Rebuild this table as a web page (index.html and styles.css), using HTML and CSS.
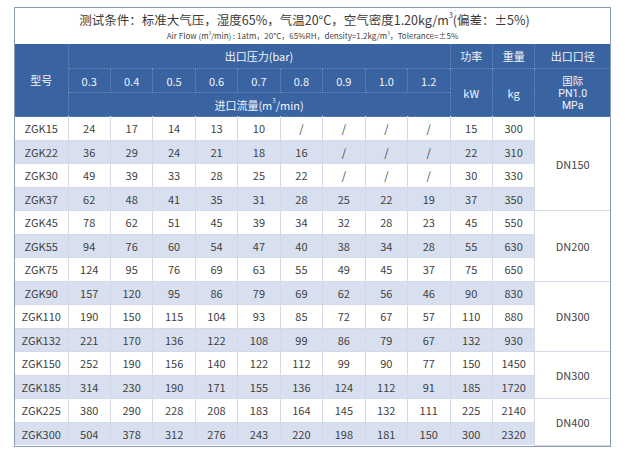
FILE: index.html
```html
<!DOCTYPE html>
<html lang="zh">
<head>
<meta charset="utf-8">
<link rel="stylesheet" href="styles.css">
</head>
<body>
<div class="sheet">
  <div class="caption">
    <div class="cap-main">测试条件：标准大气压，湿度65%，气温20°C，空气密度1.20kg/m<sup>3</sup>(偏差：±5%)</div>
    <div class="cap-sub">Air Flow (m<sup>3</sup>/min) : 1atm，20°C，65%RH，density=1.2kg/m<sup>3</sup>，Tolerance=±5%</div>
  </div>
  <table class="grid">
    <colgroup>
      <col class="c-model">
      <col class="c-num"><col class="c-num"><col class="c-num"><col class="c-num"><col class="c-num"><col class="c-num"><col class="c-num"><col class="c-num"><col class="c-num"><col class="c-num"><col class="c-num">
      <col class="c-out">
    </colgroup>
    <thead>
      <tr class="h1">
        <th rowspan="3">型号</th>
        <th colspan="9">出口压力(bar)</th>
        <th>功率</th>
        <th>重量</th>
        <th>出口口径</th>
      </tr>
      <tr class="h2">
        <th>0.3</th><th>0.4</th><th>0.5</th><th>0.6</th><th>0.7</th><th>0.8</th><th>0.9</th><th>1.0</th><th>1.2</th>
        <th rowspan="2">kW</th>
        <th rowspan="2">kg</th>
        <th rowspan="2" class="outlet-h"><span class="ol ol-cn">国际</span><span class="ol ol-en">PN1.0</span><span class="ol ol-en">MPa</span></th>
      </tr>
      <tr class="h3">
        <th colspan="9">进口流量(m<sup>3</sup>/min)</th>
      </tr>
    </thead>
    <tbody>
      <tr class="grp"><td>ZGK15</td><td>24</td><td>17</td><td>14</td><td>13</td><td>10</td><td>/</td><td>/</td><td>/</td><td>/</td><td>15</td><td>300</td><td rowspan="4" class="out">DN150</td></tr>
      <tr class="alt"><td>ZGK22</td><td>36</td><td>29</td><td>24</td><td>21</td><td>18</td><td>16</td><td>/</td><td>/</td><td>/</td><td>22</td><td>310</td></tr>
      <tr><td>ZGK30</td><td>49</td><td>39</td><td>33</td><td>28</td><td>25</td><td>22</td><td>/</td><td>/</td><td>/</td><td>30</td><td>330</td></tr>
      <tr class="alt"><td>ZGK37</td><td>62</td><td>48</td><td>41</td><td>35</td><td>31</td><td>28</td><td>25</td><td>22</td><td>19</td><td>37</td><td>350</td></tr>
      <tr class="grp"><td>ZGK45</td><td>78</td><td>62</td><td>51</td><td>45</td><td>39</td><td>34</td><td>32</td><td>28</td><td>23</td><td>45</td><td>550</td><td rowspan="3" class="out">DN200</td></tr>
      <tr class="alt"><td>ZGK55</td><td>94</td><td>76</td><td>60</td><td>54</td><td>47</td><td>40</td><td>38</td><td>34</td><td>28</td><td>55</td><td>630</td></tr>
      <tr><td>ZGK75</td><td>124</td><td>95</td><td>76</td><td>69</td><td>63</td><td>55</td><td>49</td><td>45</td><td>37</td><td>75</td><td>650</td></tr>
      <tr class="grp alt"><td>ZGK90</td><td>157</td><td>120</td><td>95</td><td>86</td><td>79</td><td>69</td><td>62</td><td>56</td><td>46</td><td>90</td><td>830</td><td rowspan="3" class="out">DN300</td></tr>
      <tr><td>ZGK110</td><td>190</td><td>150</td><td>115</td><td>104</td><td>93</td><td>85</td><td>72</td><td>67</td><td>57</td><td>110</td><td>880</td></tr>
      <tr class="alt"><td>ZGK132</td><td>221</td><td>170</td><td>136</td><td>122</td><td>108</td><td>99</td><td>86</td><td>79</td><td>67</td><td>132</td><td>930</td></tr>
      <tr class="grp"><td>ZGK150</td><td>252</td><td>190</td><td>156</td><td>140</td><td>122</td><td>112</td><td>99</td><td>90</td><td>77</td><td>150</td><td>1450</td><td rowspan="2" class="out">DN300</td></tr>
      <tr class="alt"><td>ZGK185</td><td>314</td><td>230</td><td>190</td><td>171</td><td>155</td><td>136</td><td>124</td><td>112</td><td>91</td><td>185</td><td>1720</td></tr>
      <tr class="grp"><td>ZGK225</td><td>380</td><td>290</td><td>228</td><td>208</td><td>183</td><td>164</td><td>145</td><td>132</td><td>111</td><td>225</td><td>2140</td><td rowspan="2" class="out">DN400</td></tr>
      <tr class="alt"><td>ZGK300</td><td>504</td><td>378</td><td>312</td><td>276</td><td>243</td><td>220</td><td>198</td><td>181</td><td>150</td><td>300</td><td>2320</td></tr>
    </tbody>
  </table>
</div>
</body>
</html>
```
FILE: styles.css
```css
html, body {
  margin: 0;
  padding: 0;
  background: #ffffff;
}
body {
  font-family: "Noto Sans CJK SC", "Noto Sans", sans-serif;
  color: #3a3a3a;
}
.sheet {
  margin: 7px 0 0 14px;
  width: 597px;
  box-sizing: border-box;
  border: 1px solid #8c9ab8;
}
.caption {
  height: 36px;
  text-align: center;
  display: flex;
  flex-direction: column;
  align-items: center;
}
.cap-main {
  font-size: 12.5px;
  line-height: 17px;
  margin-top: 3px;
  margin-right: 16px;
  color: #3a3a3a;
}
.cap-main sup, .cap-sub sup, .h3 sup {
  font-size: 0.55em;
  vertical-align: top;
  line-height: 1;
  position: relative;
  top: 1px;
}
.cap-sub {
  font-size: 8px;
  line-height: 11px;
  margin-top: 2px;
  color: #444;
}
.grid {
  width: 595px;
  border-collapse: collapse;
  table-layout: fixed;
  font-size: 11px;
}
.c-model { width: 53px; }
.c-num { width: 42.45px; }
.c-out { width: 75px; }
th {
  background: #3a63a2;
  color: #f2f5fb;
  font-weight: normal;
  padding: 0;
  text-align: center;
  border: 1px dotted #6a8bc0;
  font-size: 11px;
}
thead tr:first-child th { border-top: none; }
th:first-child { border-left: none; }
th:last-child, .h2 .outlet-h { border-right: none; }
.h1 th { height: 24px; }
.h2 th { height: 23px; }
.h3 th { height: 23px; }
.outlet-h { padding-top: 1px; }
.ol {
  display: block;
  font-size: 10.5px;
}
.ol-cn { line-height: 14px; }
.ol-en {
  font-family: Roboto, "Noto Sans", sans-serif;
  line-height: 12.5px;
}
td {
  height: 22.5px;
  padding: 0;
  text-align: center;
  border: 1px solid #d3d9e6;
  border-top-color: #c9d1e2;
  background: #ffffff;
  color: #3f3f3f;
}
td:first-child { border-left: none; }
td.out { border-right: none; background: #ffffff; }
tr.alt td { background: #d8e0f0; }
tr.alt td.out { background: #ffffff; }
tr.grp td { border-top: 1px solid #8c9ab8; }
tbody tr:first-child td { border-top: none; }
tbody tr:last-child td { border-bottom: none; }
```
